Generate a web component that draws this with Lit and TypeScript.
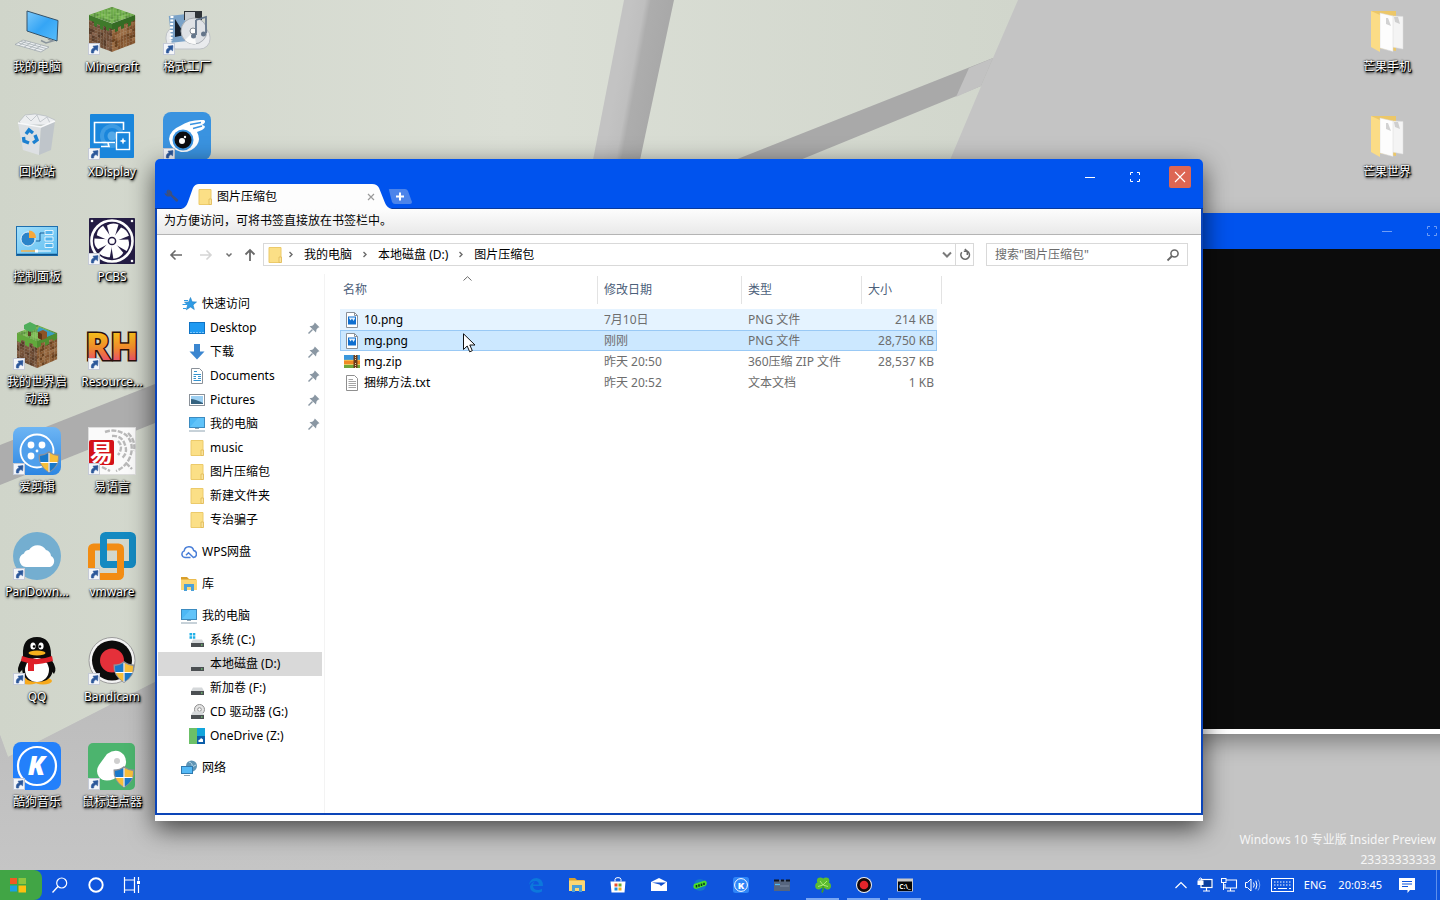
import { LitElement, html, svg, css, nothing, SVGTemplateResult, TemplateResult } from "lit";
import { customElement, property } from "lit/decorators.js";
import { classMap } from "lit/directives/class-map.js";

/* ---------- drawing helpers ---------- */

const pixels = (cols: number, rows: number, colors: string[], seed: number) => {
  const out: SVGTemplateResult[] = [];
  let s = seed;
  for (let y = 0; y < rows; y++) {
    for (let x = 0; x < cols; x++) {
      s = (s * 1103515245 + 12345) % 2147483648;
      const c = colors[Math.floor((s / 2147483648) * colors.length)];
      out.push(svg`<rect x=${x} y=${y} width="1.05" height="1.05" fill=${c} />`);
    }
  }
  return out;
};

const GRASS = ["#5a9c37", "#6bb03f", "#4f8d31", "#79bd4c", "#62a63b"];
const DIRT_L = ["#6b4a33", "#7b573d", "#5a3d2a", "#86614a", "#6f4d36"];
const DIRT_R = ["#7d4f2c", "#8f6138", "#69411f", "#9b6d45", "#84552f"];

const shortcut = svg`
  <rect x="0.5" y="36.5" width="11" height="11" fill="#f4f6fa" stroke="#c5cad6" />
  <path d="M3.5 46 Q2.6 41.6 6.2 40.9 L5 39.2 L10 38.6 L9.6 43.8 L8 42.5 Q5.4 43 5.6 46 Z" fill="#2b579a" stroke="#2b579a" stroke-width="0.6" />`;

const shield = svg`
  <path d="M36 24 Q40 27.5 46.5 27.6 Q47.5 39 36 46 Q24.5 39 25.5 27.6 Q32 27.5 36 24Z" fill="#8c9199" />
  <path d="M35.5 26 Q31.5 28.7 27 29 Q26.8 32 27.6 35 H35.5Z" fill="#1979ca" />
  <path d="M36.5 26 Q40.5 28.7 45 29 Q45.2 32 44.4 35 H36.5Z" fill="#f7bf3a" />
  <path d="M27.9 36 Q29.9 41 35.5 44.5 V36Z" fill="#f7bf3a" />
  <path d="M44.1 36 Q42.1 41 36.5 44.5 V36Z" fill="#1979ca" />
  <path d="M36 26 V45 M27.5 35.5 H44.5" stroke="#fff" stroke-width="1" />`;

const folderBig = svg`
  <g transform="translate(-2 0)">
  <path d="M10 4 H35 V44 L10 40Z" fill="#ecc768" />
  <path d="M31 9 L42 9.5 V42 L31 40Z" fill="#f4f4f4" stroke="#dedede" stroke-width="0.5" />
  <path d="M33 10 L37 10 L39 17 L34 15Z" fill="#cfcfcf" />
  <path d="M19 6 L32 9 V44.5 L19 41Z" fill="#fdfdfd" stroke="#d8d8d8" stroke-width="0.5" />
  <path d="M25 11 L27 11 L30 19 L25 17Z" fill="#d2d2d2" />
  <path d="M10 4 L19 8 V45 L10 40Z" fill="#fbdc86" />
  </g>`;

const cube = svg`
  <g transform="matrix(2.875 1 -2.875 1 24 0)">${pixels(8, 8, GRASS, 7)}</g>
  <g transform="matrix(2.875 1.1 0 3.05 1 8.5)">${pixels(8, 9, DIRT_L, 21)}</g>
  <g transform="matrix(2.875 -1.1 0 3.05 24 17.3)">${pixels(8, 9, DIRT_R, 33)}</g>
  <path d="M1 8 L24 16.5 V22 L21 21 V24 L18 23 V20 L15 19 V23 L12 22 V18 L9 17 V20 L6 19 V15 L1 13Z" fill="#3f7a2b" />
  <path d="M47 8 L24 16.5 V23 L27 22 V25 L30 24 V20 L33 19 V22 L36 21 V17 L40 16 V20 L43 18 V15 L47 13Z" fill="#356b24" />`;

const desktopArt: Record<string, SVGTemplateResult> = {
  computer: svg`
    <defs><linearGradient id="scr" x1="0" y1="0" x2="1" y2="1"><stop offset="0" stop-color="#7cc9fb" /><stop offset="0.5" stop-color="#35a5f5" /><stop offset="1" stop-color="#57bdfb" /></linearGradient></defs>
    <path d="M14 4 L45 13.5 L44 34 L14 24Z" fill="url(#scr)" stroke="#35536b" stroke-width="1" />
    <path d="M35 32 L40 34 L33 36 L28 33.5" fill="none" stroke="#8b959c" stroke-width="1.5" />
    <path d="M10 33 L36 40 L28 45 L2 37.5Z" fill="#eceff1" stroke="#98a1a7" stroke-width="0.7" />
    <path d="M8 34.5 L33 41.5 M5.5 36 L30.5 43.2 M13 34 L6 38.8 M18 35.5 L11 40.3 M23 37 L16 41.8 M28 38.5 L21 43.3" stroke="#a4adb3" stroke-width="0.8" />`,
  cube,
  factory: svg`
    <rect x="3" y="20" width="44" height="22" rx="10" fill="#e9ebed" stroke="#bfc3c7" />
    <rect x="7" y="8" width="16" height="27" fill="#7aa2c8" transform="rotate(-6 15 20)" />
    <path d="M9 9 L8 34" stroke="#fff" stroke-width="3" stroke-dasharray="2 1.5" />
    <path d="M12 12 L22 28 L12 30Z" fill="#16202c" />
    <rect x="21" y="4" width="18" height="9" fill="#2f3338" />
    <rect x="22" y="5" width="10" height="8" fill="#c9cdd1" />
    <circle cx="31" cy="24" r="13" fill="#dfe2e6" stroke="#a9aeb4" />
    <path d="M31 24 L22 33 A13 13 0 0 0 33 37Z" fill="#fafafa" />
    <circle cx="30" cy="24" r="3" fill="#fff" stroke="#878d94" />
    <path d="M33 13 L43 10 V26 M33 13 V28" fill="none" stroke="#64758a" stroke-width="1.8" />
    <circle cx="30.5" cy="29" r="2.5" fill="#64758a" /><circle cx="40.5" cy="27" r="2.5" fill="#64758a" />
    ${shortcut}`,
  recycle: svg`
    <path d="M6 10 L12 3 L22 2 L33 4 L42 8 L38 13 L10 13Z" fill="#eceef0" stroke="#b3b9bf" stroke-width="0.7" />
    <path d="M13 4 L18 9 L24 3 L27 10 L34 5 L37 11" fill="none" stroke="#c3c8cd" />
    <path d="M5 11 L28 15 L26 43 L10 38Z" fill="#dde0e3" />
    <path d="M28 15 L42 9 L38 38 L26 43Z" fill="#bfc5ca" />
    <path d="M5 11 L28 15 L42 9" fill="none" stroke="#f8f9fa" stroke-width="1.5" />
    <path d="M13 22 L16 18 L20 21 M22 23 L24 28 L20 31 M16 31 L11 29 L10.5 25" fill="none" stroke="#1c80d0" stroke-width="3.4" />`,
  xdisplay: svg`
    <rect x="2" y="2" width="44" height="44" rx="1" fill="#1a86dc" />
    <circle cx="24" cy="24" r="12" fill="#3d9be3" /><circle cx="24" cy="24" r="8" fill="#1a86dc" /><circle cx="24" cy="24" r="4.5" fill="#54a9e8" />
    <path d="M27 30.5 H6.5 V10.5 H35.5 V18" fill="none" stroke="#fff" stroke-width="1.6" />
    <path d="M13 34.5 H21 L20 31" fill="none" stroke="#fff" stroke-width="1.6" />
    <rect x="28.5" y="20.5" width="13" height="17" fill="#1a86dc" stroke="#fff" stroke-width="1.4" />
    <path d="M35 25.5 L36 28 L38.5 29 L36 30 L35 32.5 L34 30 L31.5 29 L34 28Z" fill="#fff" />
    ${shortcut}`,
  itools: svg`
    <rect x="0" y="0" width="48" height="48" rx="8" fill="#3a93e0" />
    <path d="M17 14 Q27 7 41 8 Q44 10 39 13 Q45 14 39 18 L34 20 Q38 27 34 33 Q28 41 18 40 Q7 37 6 27 Q7 18 17 14Z" fill="#fff" />
    <path d="M27 12.5 L38 10.5 M30 16.5 L39 14" stroke="#3a93e0" stroke-width="1.6" />
    <circle cx="20" cy="28" r="10.5" fill="#3a93e0" /><circle cx="20" cy="28" r="8.500" fill="#0c0c10" />
    <circle cx="19" cy="29" r="3" fill="#fff" /><circle cx="22" cy="25" r="1.2" fill="#fff" />
    ${shortcut}`,
  control: svg`
    <defs><linearGradient id="cp" x1="0" y1="0" x2="1" y2="1"><stop offset="0" stop-color="#a5e0fb" /><stop offset="1" stop-color="#5bbcf0" /></linearGradient></defs>
    <rect x="3.5" y="9.5" width="41" height="29" fill="url(#cp)" stroke="#1e6fae" />
    <path d="M4 37.5 H44" stroke="#0f558d" stroke-width="1.5" />
    <circle cx="15" cy="22" r="7" fill="#2b84c9" stroke="#fff" stroke-width="0.8" /><path d="M16 21 V13.5 A7 7 0 0 1 23 21Z" fill="#f6a83b" />
    <path d="M23 24 H27 V16 H32 M32 22 H35 M32 28 H35" fill="none" stroke="#155f9b" />
    <path d="M32 13.5 H40 V17.5 H32Z M32 20 H40 V24 H32Z M32 26.5 H40 V30.5 H32Z" fill="#53b4ee" stroke="#fff" stroke-width="0.8" />
    <path d="M8 34 H22" stroke="#f6b04a" stroke-width="1.5" /><path d="M24 34 H38" stroke="#fff" /><rect x="22" y="32.5" width="3" height="3" fill="#fff" />`,
  fan: svg`
    <rect x="1" y="1" width="46" height="46" rx="1" fill="#241c44" />
    <circle cx="4" cy="4" r="1.3" fill="#fff" /><circle cx="44" cy="4" r="1.3" fill="#fff" /><circle cx="44" cy="44" r="1.3" fill="#fff" />
    <circle cx="24" cy="24" r="20.5" fill="none" stroke="#fff" stroke-width="2.6" />
    ${[0, 51.4, 102.8, 154.2, 205.6, 257, 308.4].map(
      (a) => svg`<path d="M23 24 L19 8.500 Q24 5 30.5 7.5 L25.500 24Z" fill="#fff" transform="rotate(${a} 24 24)" />`
    )}
    <circle cx="24" cy="24" r="3.6" fill="#fff" stroke="#241c44" stroke-width="1.5" />
    ${shortcut}`,
  launcher: svg`
    <g transform="matrix(2.5 1 -2.5 1 24 3)">${pixels(8, 8, GRASS, 5)}</g>
    <path d="M26 5 L43 12 L36 16 L24 9Z" fill="#3a9fc4" />
    <g transform="matrix(2.5 1.1 0 2.9 4 11)">${pixels(8, 9, DIRT_L, 11)}</g>
    <g transform="matrix(2.5 -1.1 0 2.9 24 19.8)">${pixels(8, 9, DIRT_R, 13)}</g>
    <path d="M4 11 L24 19 V26 L20 24 V22 L16 21 V25 L12 23 V19 L8 18 V21 L4 19Z" fill="#62a83c" />
    <path d="M44 11 L24 19 V26 L28 24 V21 L32 20 V24 L36 22 V18 L40 17 V19 L44 17Z" fill="#4e8f30" />
    <rect x="15" y="6" width="3" height="8" fill="#5f4023" /><path d="M11 3 L17 0 L23 3 V7 L17 10 L11 7Z" fill="#4fae5b" />
    <path d="M25 10 L30 8 L34 10 V16 L29 18 L25 16Z" fill="#8d5426" /><path d="M25 10 L29 12 V18 L25 16Z" fill="#5e3616" />`,
  rh: svg`
    <defs><linearGradient id="rh" x1="0" y1="0" x2="0" y2="1"><stop offset="0.2" stop-color="#f5c518" /><stop offset="0.55" stop-color="#f08a2c" /><stop offset="0.8" stop-color="#e8506a" /></linearGradient></defs>
    <text x="24" y="38" text-anchor="middle" class="rh">RH</text>
    ${shortcut}`,
  film: svg`
    <defs><linearGradient id="fl" x1="0" y1="0" x2="0" y2="1"><stop offset="0" stop-color="#6db5f4" /><stop offset="1" stop-color="#2d86e2" /></linearGradient></defs>
    <rect width="48" height="48" rx="8" fill="url(#fl)" />
    <circle cx="24" cy="24" r="16.5" fill="#4f9fec" stroke="#fff" stroke-width="1.8" />
    <circle cx="18" cy="18" r="3.4" fill="#fff" /><circle cx="29" cy="18" r="3.4" fill="#fff" /><circle cx="18" cy="29" r="3.4" fill="#fff" /><circle cx="24" cy="24" r="1.4" fill="#fff" />
    ${shield}${shortcut}`,
  yi: svg`
    <rect x="0.5" y="0.5" width="47" height="47" fill="#fafafa" stroke="#ddd" />
    <path d="M17 5 Q28 1 38 8 Q47 17 42 30 Q38 40 28 44 M24 9 Q34 8 37 18 Q40 26 34 31 M30 14 Q36 20 30 28 M14 40 L22 44 M40 6 Q48 14 46 24 M38 36 L44 42" fill="none" stroke="#b9b9b9" stroke-width="2.4" stroke-dasharray="5 1.5" />
    <rect x="1" y="13" width="25" height="25" rx="2" fill="#d41118" />
    <text x="13.5" y="34" text-anchor="middle" font-size="23" font-weight="700" fill="#fff">易</text>
    ${shortcut}`,
  cloud: svg`
    <circle cx="24" cy="24" r="24" fill="#74aed0" />
    <path d="M13 35 A7 7 0 0 1 11 21.5 A5 5 0 0 1 16 18 A10 10 0 0 1 33 18 A7 7 0 0 1 38 24 A6 6 0 0 1 37 35Z" fill="#fff" />
    ${shortcut}`,
  vmware: svg`
    <rect x="15.5" y="3.500" width="29" height="29" rx="2" fill="none" stroke="#1489c1" stroke-width="7" />
    <rect x="3.5" y="15" width="29" height="29.500" rx="2" fill="none" stroke="#f28c13" stroke-width="7" />
    <path d="M15.500 9 V30.500 Q15.500 32.500 17.500 32.500 H28" fill="none" stroke="#1489c1" stroke-width="7" />
    ${shortcut}`,
  qq: svg`
    <ellipse cx="16" cy="44" rx="9" ry="3.5" fill="#f6a91c" /><ellipse cx="30" cy="44" rx="9" ry="3.5" fill="#f6a91c" />
    <path d="M9 22 Q3 32 6 36 L12 30Z M38 22 Q45 32 41 37 L35 30Z" fill="#0b0b0b" />
    <path d="M10 18 Q9 0 24 0 Q38 0 38 18 L40 30 Q40 45 24 45 Q9 45 9 30Z" fill="#0b0b0b" />
    <ellipse cx="24" cy="33" rx="12" ry="12" fill="#fff" />
    <ellipse cx="20" cy="9" rx="2.600" ry="3.600" fill="#fff" /><ellipse cx="28" cy="9" rx="2.600" ry="3.600" fill="#fff" /><circle cx="21" cy="9.5" r="1.2" /><circle cx="27" cy="9.5" r="1.2" />
    <ellipse cx="24" cy="16" rx="8.5" ry="2.6" fill="#f6b01c" />
    <path d="M9 19 Q24 25 39 19 L40 24 Q24 28 21 27 V34 H15 V26 L8 24Z" fill="#df2029" />
    ${shortcut}`,
  bandicam: svg`
    <circle cx="24" cy="23.5" r="23" fill="#f4f4f4" stroke="#9b9b9b" /><circle cx="24" cy="23.5" r="20" fill="#0c0c0c" /><circle cx="24" cy="23.5" r="12" fill="#e5303a" />
    ${shield}${shortcut}`,
  kugou: svg`
    <rect width="48" height="48" rx="8" fill="#2380fb" /><circle cx="24" cy="24" r="19" fill="none" stroke="#fff" stroke-width="2.2" />
    <text x="23.5" y="33" text-anchor="middle" font-size="26" font-weight="900" font-style="italic" fill="#fff">K</text>
    ${shortcut}`,
  clicker: svg`
    <rect y="1" width="47" height="47" rx="5" fill="#4cb46e" />
    <path d="M19 12 Q29 5 36 13 Q41 21 34 29 L26 37 Q16 41 11 35 Q7 29 11 23Z" fill="#fff" />
    <circle cx="29" cy="19" r="3" fill="#cfcfcf" />
    ${shield}${shortcut}`,
  folder: folderBig,
};
desktopArt.cubeLink = svg`${cube}${shortcut}`;
desktopArt.launcherLink = svg`${desktopArt.launcher}${shortcut}`;

/* 16px icons */
const drive = svg`<path d="M4 7.5 H13 L15 11 H2Z" fill="#d5d8da" /><rect x="2" y="11" width="13" height="4" fill="#4b4f52" /><rect x="12" y="12.5" width="1.5" height="1" fill="#7ef07e" />`;
const screen = svg`<rect x="0.5" y="1.5" width="15" height="10" fill="#4db8f5" stroke="#3c8bc0" /><path d="M1 11 L9 2 H15 V11Z" fill="#6ecafb" opacity="0.6" /><path d="M6 12.5 H10 M0 15 H16" stroke="#8fa4b2" />`;
const smallFolder = svg`<path d="M2 0.5 H14 V15.5 H2Z" fill="#fbdf86" stroke="#ecca6a" /><path d="M12 10 h2.5 v5.5 h-2.5z" fill="#fae39a" stroke="#dfb955" stroke-width="0.8" />`;
const explorer = svg`<path d="M0 1 H6 L8 3 H15 V5 H0Z" fill="#d99f2b" /><rect x="0" y="3.5" width="16" height="10.5" fill="#fbd775" /><path d="M3 15 V8 H13 V15 H10 V11 H6 V15Z" fill="#4aa0d8" />`;
const pngFile = svg`<path d="M2.5 0.5 H10.5 L13.5 3.5 V15.5 H2.5Z" fill="#fff" stroke="#8a9199" /><path d="M10.5 0.5 V3.5 H13.5" fill="none" stroke="#8a9199" /><rect x="4" y="4.5" width="8" height="8" fill="#0f6fd0" /><path d="M5 6 L6.5 8.5 L8 6.5 L9.5 9 L11 6.500 V5.500 H5Z" fill="#e6f3fd" />`;

const smallArt: Record<string, SVGTemplateResult> = {
  star: svg`<path d="M9.500 1.5 L11.1 5.8 L15.5 6 L12 8.9 L13.3 13.5 L9.5 11 L5.3 13.8 L6.7 9 L3.5 6.2 L7.7 5.9Z" fill="#2f9be4" stroke="#1f7fc4" stroke-width="0.6" /><path d="M3 4.500 H7 M1.500 8.500 H6 M2 12.5 H5" stroke="#2f9be4" />`,
  desktop: svg`<rect x="0.5" y="2.5" width="15" height="11" fill="#1f9af2" stroke="#0f73c4" /><path d="M1 12.5 H15" stroke="#7cc6fb" stroke-dasharray="2 1" />`,
  download: svg`<path d="M5 0 H11 V7.5 H15.5 L8 15.5 L0.5 7.5 H5Z" fill="#3b86d0" />`,
  documents: svg`<path d="M2.5 0.5 H10.5 L13.5 3.5 V15.5 H2.5Z" fill="#fff" stroke="#8a9199" /><path d="M5 3.5 H8 M4.5 6.5 H12 M4.5 8.5 H7 M9 8.5 H12 M4.5 10.5 H7 M9 10.5 H12 M4.5 12.5 H12" stroke="#3492cf" />`,
  pictures: svg`<rect x="0.5" y="2.5" width="15" height="11" fill="#fff" stroke="#8a9199" /><rect x="2" y="4" width="12" height="8" fill="#9ed0f2" /><path d="M2 7 Q6 7 14 11 V12 H2Z" fill="#35627f" />`,
  screen,
  folder: smallFolder,
  wps: svg`<path d="M9.500 13.500 H4 A3.400 3.400 0 0 1 3.200 6.900 A4.800 4.800 0 0 1 12.600 6.400 A3.600 3.600 0 0 1 12.400 13.500 L7.500 8.800 L5 11.300" fill="none" stroke="#4a7fd8" stroke-width="1.5" />`,
  explorer,
  system: svg`${drive}<path d="M0.5 1 h2.5 v2.5 h-2.5z M3.8 1 h2.5 v2.5 h-2.5z M0.5 4.3 h2.5 v2.5 h-2.5z M3.8 4.3 h2.5 v2.5 h-2.5z" fill="#1fb0e8" />`,
  drive,
  cd: svg`<circle cx="10.5" cy="5.5" r="5" fill="#e3e3e3" stroke="#8f8f8f" /><circle cx="10.5" cy="5.5" r="1.8" fill="#fff" stroke="#8f8f8f" />${drive}`,
  onedrive: svg`<rect width="8" height="16" fill="#6cc067" /><rect x="8" width="8" height="8" fill="#12a5dc" /><rect x="8" y="8" width="8" height="8" fill="#0c5ea9" /><path d="M9.5 14 V12 L11 11.5 L12 10 L14 11.5 V14Z" fill="#fff" />`,
  network: svg`<circle cx="10.5" cy="6" r="5.5" fill="#5e94b5" /><path d="M8 2 Q12 3 11 7 L15 5" fill="none" stroke="#b8d8e8" /><rect x="0.5" y="6.5" width="11" height="7" fill="#54b9f6" stroke="#2f7ab0" /><path d="M3 15.5 H9" stroke="#8fa4b2" />`,
  png: pngFile,
  zip: svg`<rect y="1" width="16" height="5" fill="#3a97dc" /><rect y="6" width="16" height="4.5" fill="#f08a24" /><rect y="10.5" width="16" height="3.5" fill="#6fa53a" /><path d="M0 6.3 H16 M0 10.5 H16" stroke="#f5cf62" stroke-width="0.8" /><rect x="9.5" y="1" width="4" height="13" fill="#6b3c1d" /><path d="M11.5 1 V6 M11.500 9 V14" stroke="#e8d7a8" stroke-dasharray="1 1" />`,
  txt: svg`<path d="M2.5 0.5 H10.5 L13.5 3.5 V15.5 H2.5Z" fill="#fff" stroke="#8f8f8f" /><path d="M4.5 4.5 H9 M4.5 6.5 H12 M4.5 8.5 H12 M4.5 10.5 H12 M4.5 12.5 H12" stroke="#a5a5a5" />`,
  pin: svg`<path d="M8.800 2.500 L13.500 7.200 L12 7.800 L10.500 9.500 L10 12.500 L3.500 6.200 L6.300 5.700 L8 4.200Z" fill="#8a97a3" /><path d="M6.500 9.500 L2.5 13.5" stroke="#8a97a3" stroke-width="1.4" />`,
  back: svg`<path d="M14 8 H3 M7.5 3.5 L3 8 L7.5 12.5" fill="none" stroke="#6a6a6a" stroke-width="1.6" />`,
  forward: svg`<path d="M2 8 H13 M8.5 3.5 L13 8 L8.5 12.5" fill="none" stroke="#d5d5d5" stroke-width="1.6" />`,
  up: svg`<path d="M8 14 V3 M3.5 7.5 L8 3 L12.5 7.5" fill="none" stroke="#6a6a6a" stroke-width="1.8" />`,
  down: svg`<path d="M5.5 6.500 L8 9 L10.5 6.500" fill="none" stroke="#6f6f6f" stroke-width="1.5" />`,
  expand: svg`<path d="M4 5.500 L8 9.5 L12 5.500" fill="none" stroke="#7a7a7a" stroke-width="2" />`,
  crumb: svg`<path d="M6.5 5 L9 7.500 L6.5 10" fill="none" stroke="#6a6a6a" stroke-width="1.4" />`,
  refresh: svg`<path d="M10.3 4.200 A4.3 4.3 0 1 1 4.800 5.200 M10.300 8 V4.200 H6.800 M10.300 4.200 L7.800 2" fill="none" stroke="#6a6a6a" stroke-width="1.5" />`,
  search: svg`<circle cx="9.5" cy="6.5" r="3.6" fill="none" stroke="#666" stroke-width="1.5" /><path d="M7 9 L2.5 13.5" stroke="#666" stroke-width="1.8" />`,
  wrench: svg`<path d="M4.5 1.5 A4 4 0 0 0 7.5 8 L13 13.5 A1.5 1.5 0 0 0 15 11.5 L9.2 6.5 A4 4 0 0 0 5 1.8 L6 4.5 L4 6 L1.5 5 A4 4 0 0 0 7.500 8" fill="#3c5080" />`,
  minimize: svg`<path d="M3 8.5 H13" stroke="currentColor" />`,
  maximize: svg`<path d="M3.5 6 V3.5 H6 M10 3.5 H12.5 V6 M12.5 10 V12.5 H10 M6 12.5 H3.5 V10" fill="none" stroke="currentColor" />`,
  close: svg`<path d="M3 3 L13 13 M13 3 L3 13" stroke="currentColor" stroke-width="1.1" />`,
  tabClose: svg`<path d="M5 5 L11 11 M11 5 L5 11" stroke="#9a9a9a" stroke-width="1.2" />`,
};

/* taskbar icons */
const barArt: Record<string, SVGTemplateResult> = {
  search: svg`<circle cx="9.7" cy="6" r="5" fill="none" stroke="#fff" stroke-width="1.2" /><path d="M6 9.5 L0.5 15.5" stroke="#fff" stroke-width="1.3" />`,
  cortana: svg`<circle cx="8" cy="8" r="6.7" fill="none" stroke="#fff" stroke-width="1.9" />`,
  taskview: svg`<path d="M0.5 0 V3 H10.5 V0 M0.5 16 V13 H10.5 V16 M0.5 3 V13 M10.500 3 V13 M14.5 0 V3.5 M14.5 8 V16" fill="none" stroke="#fff" stroke-width="1.2" /><rect x="13" y="4" width="3" height="3" fill="#fff" />`,
  edge: svg`<path d="M1 8 Q2 1 8.5 1 Q15 1.5 15 9 H5 Q5.5 13 10 13 Q12 13 14 11.8 V14.5 Q11.5 16 8.5 15.8 Q2 15 2 9.5 Q3 5.5 7 4.5 Q5 6 5 7.5 H11 Q10.5 4 7.5 4 Q3 4 1 8Z" fill="#0c78dc" />`,
  explorer,
  store: svg`<path d="M0.5 4.5 H15.5 L14.5 15.5 H1.5Z" fill="#fff" /><path d="M5 4.5 V2.5 Q5 0.6 8 0.6 Q11 0.6 11 2.5 V4.5" fill="none" stroke="#fff" /><rect x="4.5" y="6.5" width="3" height="3" fill="#e8502c" /><rect x="8.5" y="6.5" width="3" height="3" fill="#6aa92d" /><rect x="4.5" y="10.5" width="3" height="3" fill="#1c8fdd" /><rect x="8.5" y="10.5" width="3" height="3" fill="#f2b01c" />`,
  mail: svg`<path d="M0 5 L8 1 L16 5 V14 H0Z" fill="#fff" /><path d="M1 5.5 H15 L10 9 L8.5 7.5Z" fill="#0f4fd0" />`,
  iqiyi: svg`<circle cx="8" cy="8" r="6" fill="#1277c8" /><path d="M2 7 L13 3.500 Q16 5 14 8.500 L4 12 Q0 11.500 2 7Z" fill="#4be02a" /><path d="M4.500 8 V10.5 M7 7.3 V9.8 M9.500 6.5 V9 M12 5.700 V8" stroke="#0a3c1c" stroke-width="1.6" />`,
  kugou: svg`<rect width="16" height="16" rx="2.5" fill="#2f86f8" /><circle cx="8" cy="8" r="6.4" fill="none" stroke="#fff" /><text x="8" y="11.5" text-anchor="middle" font-size="9.5" font-weight="900" fill="#fff">K</text>`,
  panel: svg`<rect x="0" y="3" width="16" height="11" fill="#56657e" /><path d="M0 3.500 H5 M7 3.500 H10 M12 3.500 H16" stroke="#10151e" stroke-width="2" /><path d="M1 7.5 H6" stroke="#53b9f5" stroke-width="1.3" /><path d="M6 9 H15" stroke="#7d8ba3" />`,
  clover: svg`<g fill="#5cbc30"><circle cx="5.3" cy="3.800" r="3.4" /><circle cx="11" cy="3.800" r="3.4" /><circle cx="3.6" cy="9" r="3.4" /><circle cx="12.6" cy="9" r="3.4" /><path d="M5 5 H12 L11 11 H5Z" /></g><path d="M8 8 Q9 12 7 15.5" fill="none" stroke="#3f9e28" stroke-width="1.8" /><path d="M8 8 L5 4 M8 8 L12 4 M8 8 L3 9.500 M8 8 L13 9.500" stroke="#b5ee7c" stroke-width="0.9" />`,
  record: svg`<circle cx="8" cy="8" r="8" fill="#efefef" /><circle cx="8" cy="8" r="7" fill="#120a0a" /><circle cx="8" cy="8" r="4.3" fill="#e2252b" />`,
  cmd: svg`<rect x="0" y="1.5" width="16" height="13" fill="#c9c9c9" /><rect x="1" y="4.5" width="14" height="9.5" fill="#050505" /><text x="8" y="11.5" text-anchor="middle" font-size="6.5" font-weight="700" fill="#fff">C:\\_</text>`,
  chevron: svg`<path d="M2.5 11 L8 5.5 L13.5 11" fill="none" stroke="#fff" stroke-width="1.2" />`,
  lock: svg`<rect x="4" y="2.5" width="11" height="8" fill="#0b3f9e" stroke="#fff" stroke-width="1.2" /><path d="M9.5 11 V13.5 M6 14 H13" stroke="#fff" stroke-width="1.2" /><rect x="0.5" y="3.5" width="6" height="4.5" fill="#fff" /><path d="M2 3.5 V2 Q3.5 0 5 2 V3.5" fill="none" stroke="#fff" />`,
  net: svg`<path d="M5 3 H15.5 V11 H4 V7 M9.5 11 V13.5 M6 14 H14" fill="none" stroke="#fff" stroke-width="1.1" /><rect x="0.5" y="1.5" width="4.5" height="4" fill="none" stroke="#fff" /><path d="M2.5 5.5 V13" stroke="#fff" />`,
  volume: svg`<path d="M0.5 5.5 H2.5 L6 2 V14 L2.5 10.5 H0.5Z" fill="none" stroke="#fff" /><path d="M8.5 5.5 Q10 8 8.5 10.5 M10.8 3.8 Q13 8 10.8 12.2" fill="none" stroke="#fff" /><path d="M13 2.5 Q16.5 8 13 13.5" fill="none" stroke="#7ea6f2" />`,
  notify: svg`<path d="M0 1 H16 V13 H11 L8.5 16 V13 H0Z" fill="#fff" /><path d="M3 4.5 H13 M3 7 H13 M3 9.5 H9" stroke="#0f55dd" />`,
};

const icon16 = (art: SVGTemplateResult) => html`<svg class="i16" viewBox="0 0 16 16" aria-hidden="true">${art}</svg>`;

/* ---------- shared styles ---------- */

const base = css`
  * { box-sizing: border-box; }
  button, input { font: inherit; color: inherit; }
  button { border: 0; padding: 0; background: none; }
  a { color: inherit; text-decoration: none; }
  svg { display: block; flex: none; }
  .i16 { width: 16px; height: 16px; }
`;

/* ---------- desktop icon ---------- */

@customElement("desk-icon")
class DeskIcon extends LitElement {
  @property() art = "folder";
  @property() label = "";
  static styles = [
    base,
    css`
      :host { display: block; }
      .icon { display: flex; flex-direction: column; align-items: center; gap: 3px; width: 100%; padding-top: 7px; }
      .pic { width: 48px; height: 48px; overflow: visible; }
      .label {
        max-width: 68px; line-height: 17px; color: #fff; text-align: center;
        text-shadow: 1px 1px 0 #000, 1px 1px 2px #000, 0 0 2px #000, 1px 2px 3px #000;
      }
      .pic text { font-family: "Noto Sans", "Noto Sans CJK SC", sans-serif; }
      .pic .rh { font-size: 37px; font-weight: 800; fill: url(#rh); stroke: #2a0f0a; stroke-width: 3px; paint-order: stroke; }
    `,
  ];
  render() {
    return html`<button class="icon">
      <svg class="pic" viewBox="0 0 48 48" aria-hidden="true">${desktopArt[this.art]}</svg>
      <span class="label">${this.label}</span>
    </button>`;
  }
}

/* ---------- file manager ---------- */

interface NavEntry { art: string; text: string; sub?: boolean; pin?: boolean; gap?: boolean; current?: boolean; }

const NAV: NavEntry[] = [
  { art: "star", text: "快速访问" },
  { art: "desktop", text: "Desktop", sub: true, pin: true },
  { art: "download", text: "下载", sub: true, pin: true },
  { art: "documents", text: "Documents", sub: true, pin: true },
  { art: "pictures", text: "Pictures", sub: true, pin: true },
  { art: "screen", text: "我的电脑", sub: true, pin: true },
  { art: "folder", text: "music", sub: true },
  { art: "folder", text: "图片压缩包", sub: true },
  { art: "folder", text: "新建文件夹", sub: true },
  { art: "folder", text: "专治骗子", sub: true },
  { art: "wps", text: "WPS网盘", gap: true },
  { art: "explorer", text: "库", gap: true },
  { art: "screen", text: "我的电脑", gap: true },
  { art: "system", text: "系统 (C:)", sub: true },
  { art: "drive", text: "本地磁盘 (D:)", sub: true, current: true },
  { art: "drive", text: "新加卷 (F:)", sub: true },
  { art: "cd", text: "CD 驱动器 (G:)", sub: true },
  { art: "onedrive", text: "OneDrive (Z:)", sub: true },
  { art: "network", text: "网络", gap: true },
];

const FILES = [
  { art: "png", name: "10.png", date: "7月10日", type: "PNG 文件", size: "214 KB", state: "hover" },
  { art: "png", name: "mg.png", date: "刚刚", type: "PNG 文件", size: "28,750 KB", state: "selected" },
  { art: "zip", name: "mg.zip", date: "昨天 20:50", type: "360压缩 ZIP 文件", size: "28,537 KB", state: "" },
  { art: "txt", name: "捆绑方法.txt", date: "昨天 20:52", type: "文本文档", size: "1 KB", state: "" },
];

@customElement("file-window")
class FileWindow extends LitElement {
  static styles = [
    base,
    css`
      :host {
        display: flex; flex-direction: column; color: #000; border-radius: 5px 5px 0 0;
        box-shadow: 0 8px 26px rgba(0, 0, 0, 0.65);
      }
      .title { display: flex; height: 50px; flex: none; background: #0053ee; border-radius: 5px 5px 0 0; border-bottom: 1px solid #0a3a9c; padding: 0 12px 0 8px; }
      .tabs { display: flex; align-items: flex-end; flex: 1; margin-bottom: -1px; }
      .wrench { margin-bottom: 5px; }
      .tab { position: relative; display: flex; align-items: center; width: 211px; height: 25px; padding: 0 13px 0 16px; gap: 4px; margin-left: 2px; }
      .shape { position: absolute; inset: 0; width: 100%; height: 100%; }
      .tab > span, .tab > button, .tab > .i16 { position: relative; }
      .tab > span { flex: 1; }
      .plus { margin: 0 0 5px -4px; }
      .plus svg { width: 24px; height: 15px; }
      .controls { display: flex; gap: 23px; padding-top: 7px; color: #fff; }
      .controls button { display: grid; place-items: center; width: 22px; height: 22px; border-radius: 2px; }
      .controls .close { background: #dd6653; }
      .frame { display: flex; flex-direction: column; flex: 1; min-height: 0; background: #fff; border: 2px solid #0c45b8; border-top: 0; }
      .marks { flex: none; height: 26px; padding: 0 7px; line-height: 24px; background: linear-gradient(#fdfdfd, #e9e9e9); border-bottom: 1px solid #b4b4b4; }
      .bar { display: flex; align-items: center; padding: 8px 13px 8px 4px; }
      .bar > button { display: grid; place-items: center; width: 30px; height: 22px; }
      .bar > .narrow { width: 16px; }
      .bar > .up { width: 26px; }
      .path { display: flex; align-items: center; flex: 1; height: 23px; border: 1px solid #d9d9d9; padding-left: 3px; margin-right: 12px; }
      .path a { padding: 0 5px; }
      .path .last { margin-left: auto; }
      .path .reload { display: grid; place-items: center; width: 18px; height: 21px; border-left: 1px solid #d9d9d9; }
      .find { display: flex; align-items: center; flex: 0 1 202px; min-width: 0; height: 23px; border: 1px solid #d9d9d9; padding: 0 6px 0 8px; }
      .find input { flex: 1; width: 0; min-width: 0; border: 0; padding: 0; background: none; outline: 0; color: #333; }
      .find input::placeholder { color: #6b6b6b; opacity: 1; }
      .main { display: flex; flex: 1; min-height: 0; }
      nav { width: 168px; flex: none; padding: 18px 2px 0 1px; border-right: 1px solid #f3f3f3; }
      nav a { display: flex; align-items: center; gap: 5px; height: 24px; padding: 0 0 0 23px; }
      nav a.sub { padding-left: 31px; }
      nav a.gap { margin-top: 8px; }
      nav a.current { background: #d9d9d9; }
      nav a span { flex: 1; white-space: nowrap; }
      .list { flex: 1; padding-left: 15px; }
      table { width: 597px; border-collapse: separate; border-spacing: 0; table-layout: fixed; }
      th { position: relative; height: 35px; padding: 0 6px 4px; font-weight: 400; text-align: left; color: #4c607a; }
      th:first-child { padding-left: 3px; }
      th::after { content: ""; position: absolute; right: 0; top: 2px; width: 1px; height: 28px; background: #e3e3e3; }
      th:last-child::after { right: -5px; }
      .c1 { width: 258px; } .c2 { width: 144px; } .c3 { width: 120px; } .c4 { width: 75px; }
      .sort { position: absolute; left: 0; right: 4px; margin: 0 auto; top: 2px; width: 9px; height: 5px; }
      td { height: 21px; padding: 0 6px; color: #6d6d6d; white-space: nowrap; line-height: 19px; border: 0 solid #99c9f5; border-width: 1px 0; border-color: transparent; }
      td:last-child { text-align: right; padding: 0 2px; border-right-width: 1px; }
      td:first-child { padding: 0 4px 0 3px; border-left-width: 1px; }
      .name { display: flex; align-items: center; gap: 4px; color: #000; }
      .hover td { background: #e5f3ff; }
      .selected td { background: #cce8ff; border-color: #99c9f5; }
      .foot { flex: none; height: 6px; background: #fff; }
    `,
  ];

  private nav(e: NavEntry): TemplateResult {
    return html`<a href="#" class=${classMap({ sub: !!e.sub, gap: !!e.gap, current: !!e.current })}>
      ${icon16(smallArt[e.art])}<span>${e.text}</span>${e.pin ? icon16(smallArt.pin) : nothing}
    </a>`;
  }

  render() {
    const crumbs = ["我的电脑", "本地磁盘 (D:)", "图片压缩包"];
    return html`
      <header class="title">
        <div class="tabs">
          <button class="wrench" aria-label="设置">${icon16(smallArt.wrench)}</button>
          <div class="tab">
            <svg class="shape" viewBox="0 0 212 25" preserveAspectRatio="none" aria-hidden="true">
              <path d="M0 25 Q5 24 7 18 L12 4 Q14 0 18 0 H192 Q197 0 199 4 L205 19 Q207 24 212 25Z" fill="#fdfdfd" />
            </svg>
            ${icon16(smallArt.folder)}<span>图片压缩包</span>
            <button aria-label="关闭标签页">${icon16(smallArt.tabClose)}</button>
          </div>
          <button class="plus" aria-label="新建标签页">
            <svg viewBox="0 0 24 15" aria-hidden="true">
              <path d="M1 1 Q0 0 2 0 H17 Q19 0 20 2 L24 13 Q24 15 22 15 H7 Q5 15 4 13Z" fill="#4c84ea" />
              <path d="M12 3.5 V11.5 M8 7.5 H16" stroke="#fff" stroke-width="2" />
            </svg>
          </button>
        </div>
        <div class="controls">
          <button aria-label="最小化">${icon16(smallArt.minimize)}</button>
          <button aria-label="最大化">${icon16(smallArt.maximize)}</button>
          <button class="close" aria-label="关闭">${icon16(smallArt.close)}</button>
        </div>
      </header>
      <div class="frame">
        <div class="marks">为方便访问，可将书签直接放在书签栏中。</div>
        <div class="bar">
          <button aria-label="后退">${icon16(smallArt.back)}</button>
          <button aria-label="前进">${icon16(smallArt.forward)}</button>
          <button class="narrow" aria-label="最近">${icon16(smallArt.down)}</button>
          <button class="up" aria-label="向上">${icon16(smallArt.up)}</button>
          <div class="path">
            ${icon16(smallArt.folder)}
            ${crumbs.map((c) => html`${icon16(smallArt.crumb)}<a href="#">${c}</a>`)}
            <button class="last" aria-label="历史">${icon16(smallArt.expand)}</button>
            <button class="reload" aria-label="刷新">${icon16(smallArt.refresh)}</button>
          </div>
          <label class="find">
            <input type="text" aria-label="搜索" placeholder='搜索"图片压缩包"' />${icon16(smallArt.search)}
          </label>
        </div>
        <div class="main">
          <nav>${NAV.map((e) => this.nav(e))}</nav>
          <div class="list">
            <table>
              <thead>
                <tr>
                  <th class="c1">名称<svg class="sort" viewBox="0 0 9 5" aria-hidden="true"><path d="M0.5 4.5 L4.5 0.7 L8.5 4.5" fill="none" stroke="#6a6a6a" /></svg></th>
                  <th class="c2">修改日期</th><th class="c3">类型</th><th class="c4">大小</th>
                </tr>
              </thead>
              <tbody>
                ${FILES.map(
                  (f) => html`<tr class=${f.state}>
                    <td><div class="name">${icon16(smallArt[f.art])}${f.name}</div></td>
                    <td>${f.date}</td><td>${f.type}</td><td>${f.size}</td>
                  </tr>`
                )}
              </tbody>
            </table>
          </div>
        </div>
      </div>
      <div class="foot"></div>
    `;
  }
}

/* ---------- console window ---------- */

@customElement("console-window")
class ConsoleWindow extends LitElement {
  static styles = [
    base,
    css`
      :host { display: flex; flex-direction: column; box-shadow: 0 8px 20px rgba(0, 0, 0, 0.35); }
      .title { display: flex; justify-content: flex-end; align-items: center; gap: 29px; height: 36px; flex: none; padding-right: 60px; background: #0053ee; color: #6f9df5; }
      .screen { flex: 1; background: #0c0c0c; }
      .foot { height: 5px; background: #fff; }
    `,
  ];
  render() {
    return html`<header class="title">
        <button aria-label="最小化">${icon16(smallArt.minimize)}</button>
        <button aria-label="最大化">${icon16(smallArt.maximize)}</button>
      </header>
      <div class="screen"></div>
      <div class="foot"></div>`;
  }
}

/* ---------- taskbar ---------- */

@customElement("task-bar")
class TaskBar extends LitElement {
  static styles = [
    base,
    css`
      :host { display: grid; grid-template-columns: 1fr auto 1fr; height: 30px; background: #0f55dd; color: #fff; }
      .side { display: flex; align-items: center; }
      .start { display: grid; place-items: center; width: 42px; height: 30px; padding-right: 6px; background: #41a545; border-radius: 0 8px 8px 0; }
      .side .tool { width: 36px; display: grid; place-items: center; }
      .side svg { overflow: visible; }
      .apps { display: flex; }
      .apps button { display: grid; place-items: center; width: 33px; margin: 0 4px; border-bottom: 2px solid transparent; border-top: 2px solid transparent; }
      .apps button.open { border-bottom-color: #7aa7f2; }
      .tray { justify-content: flex-end; gap: 8px; }
      .tray text, .apps text { font-family: "Noto Sans", sans-serif; }
      .kbd { width: 23px; height: 14px; }
      .keys { margin: 0 2px; }
      .clock { font-size: 11px; margin: 0 9px 0 4px; }
      .lang { font-size: 11px; }
      .edge { width: 4px; height: 30px; margin-left: 13px; border-left: 1px solid #5d8fec; }
    `,
  ];
  render() {
    const apps = ["edge", "explorer", "store", "mail", "iqiyi", "kugou", "panel", "clover", "record", "cmd"];
    const open = new Set(["clover", "record", "cmd"]);
    return html`
      <div class="side">
        <button class="start" aria-label="开始">
          <svg class="i16" viewBox="0 0 16 16" aria-hidden="true">
            <path d="M0 1 H7 V7 H0Z" fill="#ee5a24" /><path d="M8.5 1 H16 V7 H8.5Z" fill="#8cc63f" />
            <path d="M0 8.5 H7 V14.5 H0Z" fill="#1ba1e2" /><path d="M8.5 8.5 H16 V15.5 H8.5Z" fill="#fdc010" />
          </svg>
        </button>
        <button class="tool" aria-label="搜索">${icon16(barArt.search)}</button>
        <button class="tool" aria-label="助手">${icon16(barArt.cortana)}</button>
        <button class="tool" aria-label="任务视图">${icon16(barArt.taskview)}</button>
      </div>
      <div class="apps">
        ${apps.map((a) => html`<button class=${classMap({ open: open.has(a) })} aria-label=${a}>${icon16(barArt[a])}</button>`)}
      </div>
      <div class="side tray">
        ${["chevron", "lock", "net", "volume"].map((a) => html`<button aria-label=${a}>${icon16(barArt[a])}</button>`)}
        <button class="keys" aria-label="键盘">
          <svg class="kbd" viewBox="0 0 23 14" aria-hidden="true">
            <rect x="0.5" y="0.5" width="22" height="13" fill="none" stroke="#fff" />
            <path d="M3 4 H20 M3 7 H20" stroke="#fff" stroke-dasharray="1.5 1.5" /><path d="M3 10.5 H5 M7 10.5 H16 M18 10.5 H20" stroke="#fff" />
          </svg>
        </button>
        <span class="lang">ENG</span>
        <time class="clock">20:03:45</time>
        <button aria-label="通知">${icon16(barArt.notify)}</button>
        <span class="edge"></span>
      </div>
    `;
  }
}

/* ---------- root ---------- */

const LEFT: [string, string][] = [
  ["computer", "我的电脑"], ["recycle", "回收站"], ["control", "控制面板"], ["launcherLink", "我的世界启动器"],
  ["film", "爱剪辑"], ["cloud", "PanDown..."], ["qq", "QQ"], ["kugou", "酷狗音乐"],
  ["cubeLink", "Minecraft"], ["xdisplay", "XDisplay"], ["fan", "PCBS"], ["rh", "Resource..."],
  ["yi", "易语言"], ["vmware", "vmware"], ["bandicam", "Bandicam"], ["clicker", "鼠标连点器"],
  ["factory", "格式工厂"], ["itools", ""],
];
const RIGHT = ["芒果手机", "芒果世界"];

@customElement("app-root")
class AppRoot extends LitElement {
  static styles = [
    base,
    css`
      :host {
        display: flex; flex-direction: column; height: 100vh; overflow: hidden;
        font: 12px/18px "Noto Sans", "Noto Sans CJK SC", sans-serif;
      }
      .desk { position: relative; display: flex; justify-content: space-between; flex: 1; min-height: 0; overflow: hidden; background: #c4c4c4; }
      .paper { position: absolute; inset: 0; width: 100%; height: 100%; }
      .icons { position: relative; display: grid; grid-auto-flow: column; grid-template-rows: repeat(8, 105px); grid-auto-columns: 74px; column-gap: 1px; }
      .right { margin-right: 16px; }
      .mark { position: absolute; right: 4px; bottom: 0; line-height: 20px; text-align: right; color: #f6f6f6; }
      console-window { position: absolute; left: 55%; right: -60px; top: 213px; bottom: 136px; }
      file-window { position: absolute; left: 155px; right: 237px; top: 159px; bottom: 49px; }
      .pointer { position: absolute; left: 463px; top: 333px; width: 13px; height: 20px; }
    `,
  ];
  render() {
    return html`
      <main class="desk">
        <svg class="paper" viewBox="0 0 1440 870" preserveAspectRatio="none" aria-hidden="true">
          <defs>
            <linearGradient id="pane" x1="0" y1="0" x2="1" y2="0"><stop offset="0" stop-color="#d0d5ca" /><stop offset="0.5" stop-color="#dbdfd6" /><stop offset="1" stop-color="#d1d6cc" /></linearGradient>
            <linearGradient id="beam" gradientUnits="userSpaceOnUse" x1="617" y1="78" x2="655" y2="85"><stop offset="0" stop-color="#c3c3c3" /><stop offset="0.35" stop-color="#bfbfbf" /><stop offset="0.5" stop-color="#adadad" /><stop offset="1" stop-color="#a9a9a9" /></linearGradient>
            <linearGradient id="low" x1="0" y1="0" x2="0" y2="1"><stop offset="0" stop-color="#b6b6b6" /><stop offset="1" stop-color="#c5c5c5" /></linearGradient>
          </defs>
          <path d="M0 0 H1018 L993 58 L950 160 V500 L155 682 L8 757 L0 735Z" fill="url(#pane)" />
          <path d="M0 735 L8 757 L155 682 L400 560 V870 H0Z" fill="url(#low)" />
          <path d="M624 0 H674 L640 160 H593Z" fill="url(#beam)" />
          <path d="M993 58 L735 160 H800 L981 86Z" fill="#a9a9a9" />
          <path d="M993 58 L969 68 L956 97 L981 86Z" fill="#c2c2c2" />
          <path d="M0 445 L155 384 V423 L0 485Z" fill="#adadad" />
        </svg>
        <div class="icons">${LEFT.map(([a, l]) => html`<desk-icon .art=${a} .label=${l}></desk-icon>`)}</div>
        <div class="icons right">${RIGHT.map((l) => html`<desk-icon .art=${"folder"} .label=${l}></desk-icon>`)}</div>
        <div class="mark">Windows 10 专业版 Insider Preview<br />23333333333</div>
        <console-window></console-window>
        <file-window></file-window>
        <svg class="pointer" viewBox="0 0 13 20" aria-hidden="true">
          <path d="M0.5 0.8 V16.5 L4.2 13 L6.7 18.8 L9.3 17.7 L6.8 12 H12Z" fill="#fff" stroke="#111" />
        </svg>
      </main>
      <task-bar></task-bar>
    `;
  }
}
